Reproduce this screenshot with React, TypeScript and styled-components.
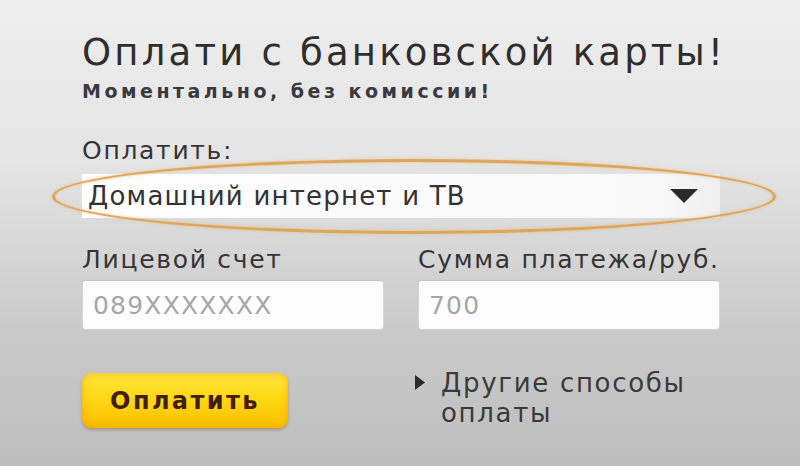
import React, { useState } from "react";
import styled, { createGlobalStyle } from "styled-components";

const GlobalStyle = createGlobalStyle`
  html, body {
    margin: 0;
    padding: 0;
  }
  body {
    font-family: "DejaVu Sans", Verdana, sans-serif;
  }
`;

const Page = styled.div`
  width: 800px;
  height: 466px;
  box-sizing: border-box;
  padding: 30px 0 0 82px;
  background: linear-gradient(180deg, #eeeeee 0%, #e4e4e4 35%, #cacaca 70%, #bebebe 100%);
  color: #333;
  overflow: hidden;
`;

const Title = styled.h1`
  margin: 0;
  font-size: 37px;
  font-weight: normal;
  line-height: 46px;
  color: #2e2e2e;
  letter-spacing: 3.2px;
  white-space: nowrap;
`;

const Subtitle = styled.div`
  margin-top: 4px;
  font-size: 19px;
  line-height: 22px;
  font-weight: bold;
  color: #3b3842;
  letter-spacing: 3.5px;
  white-space: nowrap;
`;

const Label = styled.div`
  font-size: 25px;
  line-height: 28px;
  color: #353535;
  letter-spacing: 1.7px;
  white-space: nowrap;
`;

const PayLabel = styled(Label)`
  margin-top: 35px;
`;

const SelectWrap = styled.div`
  position: relative;
  width: 638px;
  margin-top: 9px;
`;

const Select = styled.div`
  height: 44px;
  box-sizing: border-box;
  padding: 0 22px 0 6px;
  background: linear-gradient(90deg, #fdfdfd 0%, #f8f8f8 90%, #efefef 100%);
  display: flex;
  align-items: center;
  justify-content: space-between;
  font-size: 26px;
  letter-spacing: 1.2px;
  color: #333;
`;

const Ring = styled.div`
  position: absolute;
  left: -30px;
  right: -56px;
  top: -15px;
  bottom: -16px;
  border: 3px solid #dea55c;
  border-radius: 50%;
  box-shadow: 0 0 3px rgba(240, 180, 90, 0.7), inset 0 0 3px rgba(240, 180, 90, 0.7);
  pointer-events: none;
`;

const Caret = styled.svg`
  width: 28px;
  height: 14px;
`;

const Fields = styled.div`
  display: grid;
  grid-template-columns: 302px 302px;
  column-gap: 34px;
  margin-top: 28px;
`;

const Field = styled.div`
  display: flex;
  flex-direction: column;
  gap: 6px;
`;

const Input = styled.input`
  height: 50px;
  box-sizing: border-box;
  border: 1px solid #d4d4d4;
  border-top-color: #c4c4c4;
  border-radius: 4px;
  background: #fcfcfc;
  padding: 0 10px;
  font-family: "DejaVu Sans", Verdana, sans-serif;
  font-size: 25px;
  letter-spacing: 1.2px;
  color: #333;
  outline: none;
  &::placeholder {
    color: #a6a6a6;
  }
`;

const Bottom = styled.div`
  display: flex;
  align-items: flex-start;
  gap: 127px;
  margin-top: 43px;
`;

const PayButton = styled.button`
  width: 206px;
  height: 55px;
  border: none;
  border-radius: 9px;
  background: linear-gradient(180deg, #ffe640 0%, #ffd814 45%, #f8bf00 100%);
  box-shadow: inset 0 0 7px rgba(240, 140, 0, 0.55), 0 2px 3px rgba(110, 80, 0, 0.35);
  font-family: "DejaVu Sans", Verdana, sans-serif;
  font-weight: bold;
  font-size: 24px;
  letter-spacing: 2.4px;
  color: #3f200c;
  cursor: pointer;
`;

const OtherLink = styled.a`
  display: flex;
  align-items: flex-start;
  gap: 16px;
  margin-top: -5px;
  font-size: 26px;
  line-height: 30px;
  letter-spacing: 1.7px;
  color: #3a3a3a;
  cursor: pointer;
`;

const Arrow = styled.svg`
  width: 10px;
  height: 15px;
  margin-top: 7px;
`;

export default function App() {
  const [account, setAccount] = useState("");
  const [amount, setAmount] = useState("");

  return (
    <Page>
      <GlobalStyle />
      <Title>Оплати с банковской карты!</Title>
      <Subtitle>Моментально, без комиссии!</Subtitle>
      <PayLabel>Оплатить:</PayLabel>
      <SelectWrap>
        <Select>
          <span>Домашний интернет и ТВ</span>
          <Caret viewBox="0 0 28 14">
            <path d="M0 0 H28 L14 14 Z" fill="#2b2b2b" />
          </Caret>
        </Select>
        <Ring />
      </SelectWrap>
      <Fields>
        <Field>
          <Label>Лицевой счет</Label>
          <Input
            placeholder="089XXXXXXX"
            value={account}
            onChange={(e) => setAccount(e.target.value)}
          />
        </Field>
        <Field>
          <Label>Сумма платежа/руб.</Label>
          <Input
            placeholder="700"
            value={amount}
            onChange={(e) => setAmount(e.target.value)}
          />
        </Field>
      </Fields>
      <Bottom>
        <PayButton>Оплатить</PayButton>
        <OtherLink>
          <Arrow viewBox="0 0 10 15">
            <path d="M0 0 L10 7.5 L0 15 Z" fill="#2b2b2b" />
          </Arrow>
          <span>
            Другие способы
            <br />
            оплаты
          </span>
        </OtherLink>
      </Bottom>
    </Page>
  );
}
